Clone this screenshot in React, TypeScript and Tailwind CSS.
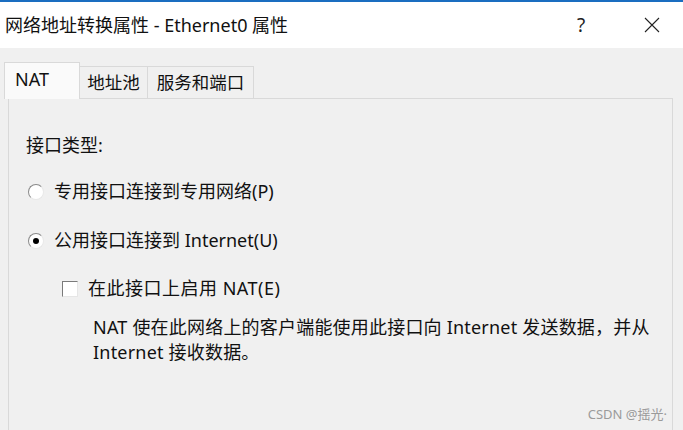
import React from "react";

const font = { fontFamily: '"Noto Sans", "Noto Sans CJK SC", sans-serif' };

function Radio({ checked }: { checked?: boolean }) {
  return (
    <div className="w-[16px] h-[16px] rounded-full border border-t-[#8a8a8a] border-l-[#8a8a8a] border-r-[#e8e8e8] border-b-[#e8e8e8] bg-white flex items-center justify-center shrink-0">
      {checked && <div className="w-[6px] h-[6px] rounded-full bg-black" />}
    </div>
  );
}

export default function App() {
  return (
    <div
      className="w-[683px] h-[430px] bg-[#f0f0f0] overflow-hidden relative text-[#111]"
      style={font}
    >
      <div className="h-[2px] bg-[#1a6dc0]" />
      <div className="h-[46px] bg-white flex items-center">
        <div className="pl-[5px] text-[18px] leading-none flex-1 whitespace-nowrap">
          网络地址转换属性 - Ethernet0 属性
        </div>
        <div className="w-[30px] text-center text-[19px] leading-none mr-[41px] text-[#222]">?</div>
        <div className="w-[30px] flex items-center justify-center mr-[16px]">
          <svg width="16" height="16" viewBox="0 0 16 16">
            <path d="M1 1 L15 15 M15 1 L1 15" stroke="#222" strokeWidth="1.1" fill="none" />
          </svg>
        </div>
      </div>
      <div className="pt-[14px]">
        <div className="flex items-end h-[36px] pl-[4px]">
          <div className="relative z-10 -mb-px h-[37px] w-[76px] bg-[#fafafa] border border-b-0 border-[#d9d9d9] pl-[10px] pt-[5px] text-[18px] leading-[22px]">
            NAT
          </div>
          <div className="h-[32px] w-[68px] bg-[#f0f0f0] border border-l-0 border-b-0 border-[#d9d9d9] flex items-center justify-center text-[17.5px] leading-none">
            地址池
          </div>
          <div className="h-[32px] w-[106px] bg-[#f0f0f0] border border-l-0 border-b-0 border-[#d9d9d9] flex items-center justify-center text-[17.5px] leading-none">
            服务和端口
          </div>
        </div>
        <div className="ml-[8px] w-[665px] h-[340px] border border-[#d9d9d9] bg-[#f0f0f0] pl-[17px] pt-[34px] text-[18px]">
          <div className="h-[25px] leading-[25px]">接口类型:</div>
          <div className="h-[25px] mt-[21px] flex items-center ml-[2px] gap-[10px]">
            <Radio />
            <span className="leading-[25px]">专用接口连接到专用网络(P)</span>
          </div>
          <div className="h-[25px] mt-[24px] flex items-center ml-[2px] gap-[10px]">
            <Radio checked />
            <span className="leading-[25px]">公用接口连接到 Internet(U)</span>
          </div>
          <div className="h-[25px] mt-[23px] flex items-center ml-[36px] gap-[10px]">
            <div className="w-[16px] h-[16px] bg-white border border-t-[#7a7a7a] border-l-[#7a7a7a] border-r-[#e6e6e6] border-b-[#e6e6e6] shrink-0" />
            <span className="leading-[25px] tracking-[0.5px]">在此接口上启用 NAT(E)</span>
          </div>
          <div className="mt-[14px] ml-[67px] leading-[25px] w-[570px] tracking-[0.2px]">
            <div className="whitespace-nowrap">NAT 使在此网络上的客户端能使用此接口向 Internet 发送数据，并从</div>
            <div className="whitespace-nowrap">Internet 接收数据。</div>
          </div>
        </div>
      </div>
      <div className="absolute right-[16px] top-[405px] text-[13px] leading-[18px] text-[#9a9a9a]">
        CSDN @摇光·
      </div>
    </div>
  );
}
